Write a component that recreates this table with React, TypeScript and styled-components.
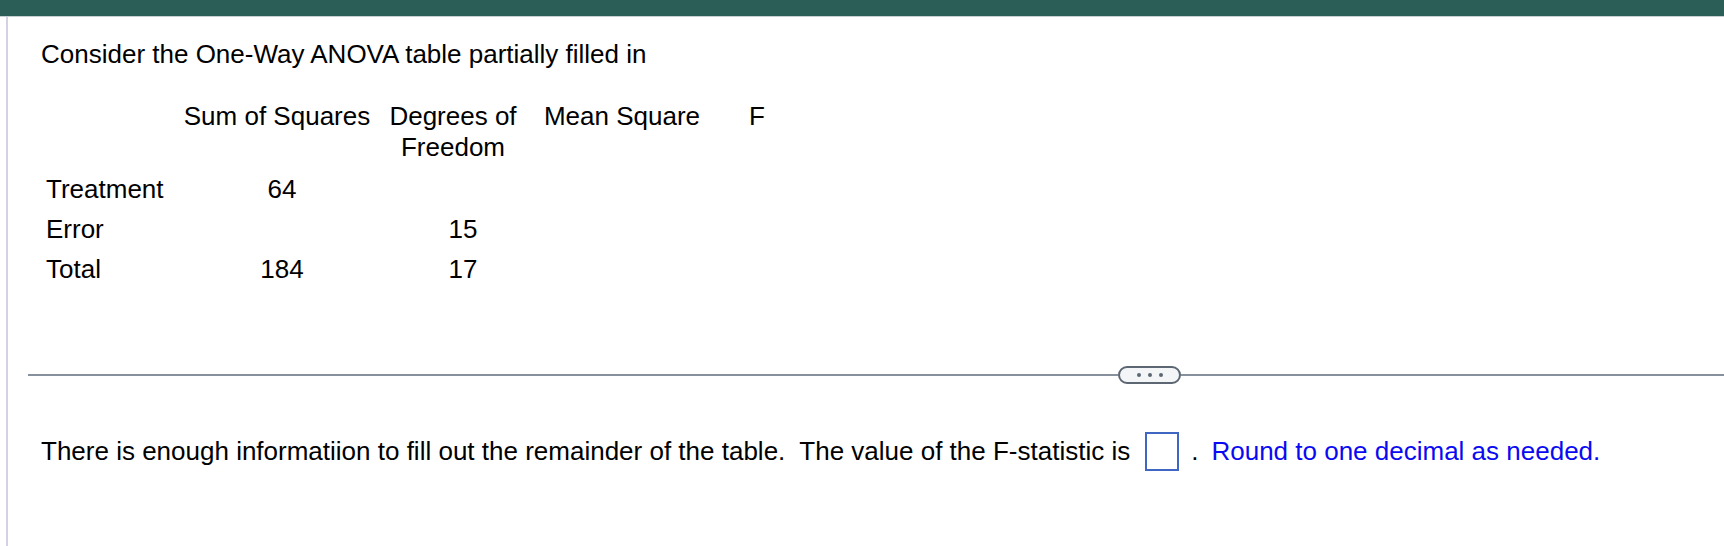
import styled, { createGlobalStyle } from 'styled-components'

const GlobalStyle = createGlobalStyle`
	body {
		margin: 0;
		background: #fff;
		font-family: 'Liberation Sans', Arial, sans-serif;
		color: #000;
	}
`

const TopBar = styled.div`
	height: 16px;
	background: #2b5e57;
	border-bottom: 1px solid #c8cfd2;
`

const Panel = styled.div`
	margin-left: 6px;
	border-left: 2px solid #d2d2e2;
	min-height: 529px;
	padding: 21px 0 0 0;
	font-size: 26px;
	line-height: 33px;
`

const Prompt = styled.div`
	padding-left: 33px;
`

const Table = styled.div`
	display: grid;
	grid-template-columns: 129px 204px 148px 190px 80px;
	margin: 30px 0 0 38px;
`

const HeadCell = styled.div`
	text-align: center;
	line-height: 31px;
	padding-bottom: 6px;
`

const LabelCell = styled.div`
	line-height: 40px;
`

const NumCell = styled.div<{ $shift?: number }>`
	line-height: 40px;
	text-align: center;
	padding-left: ${(p) => (p.$shift ?? 0) * 2}px;
`

const Divider = styled.div`
	display: flex;
	align-items: center;
	margin: 77px 0 0 20px;
`

const Rule = styled.div<{ $width?: number }>`
	height: 2px;
	background: #87919e;
	${(p) => (p.$width ? `width: ${p.$width}px;` : 'flex: 1;')}
`

const MoreButton = styled.button`
	display: flex;
	align-items: center;
	justify-content: center;
	gap: 7px;
	width: 63px;
	height: 18px;
	padding: 0;
	border: 2px solid #5c6773;
	border-radius: 9px;
	background: #f3f5f7;
`

const Dot = styled.span`
	width: 4px;
	height: 4px;
	border-radius: 50%;
	background: #5c6773;
`

const Answer = styled.div`
	display: flex;
	align-items: center;
	margin-top: 48px;
	padding-left: 33px;
	white-space: pre;
`

const AnswerBox = styled.span`
	display: inline-block;
	width: 30px;
	height: 35px;
	margin: 0 12px 0 15px;
	border: 2px solid #4066c4;
`

const Hint = styled.span`
	color: #0a0af2;
	margin-left: 13px;
`

const rows = [
	{ label: 'Treatment', ss: '64', df: '' },
	{ label: 'Error', ss: '', df: '15' },
	{ label: 'Total', ss: '184', df: '17' },
]

export default function App() {
	return (
		<>
			<GlobalStyle />
			<TopBar />
			<Panel>
				<Prompt>Consider the One-Way ANOVA table partially filled in</Prompt>
				<Table>
					<HeadCell />
					<HeadCell>Sum of Squares</HeadCell>
					<HeadCell>
						Degrees of
						<br />
						Freedom
					</HeadCell>
					<HeadCell>Mean Square</HeadCell>
					<HeadCell>F</HeadCell>
					{rows.map((r) => (
						<>
							<LabelCell key={r.label}>{r.label}</LabelCell>
							<NumCell $shift={5}>{r.ss}</NumCell>
							<NumCell $shift={10}>{r.df}</NumCell>
							<NumCell />
							<NumCell />
						</>
					))}
				</Table>
				<Divider>
					<Rule $width={1090} />
					<MoreButton aria-label="more">
						<Dot />
						<Dot />
						<Dot />
					</MoreButton>
					<Rule />
				</Divider>
				<Answer>
					There is enough informatiion to fill out the remainder of the table.  The value of the F-statistic is
					<AnswerBox />.
					<Hint>Round to one decimal as needed.</Hint>
				</Answer>
			</Panel>
		</>
	)
}
